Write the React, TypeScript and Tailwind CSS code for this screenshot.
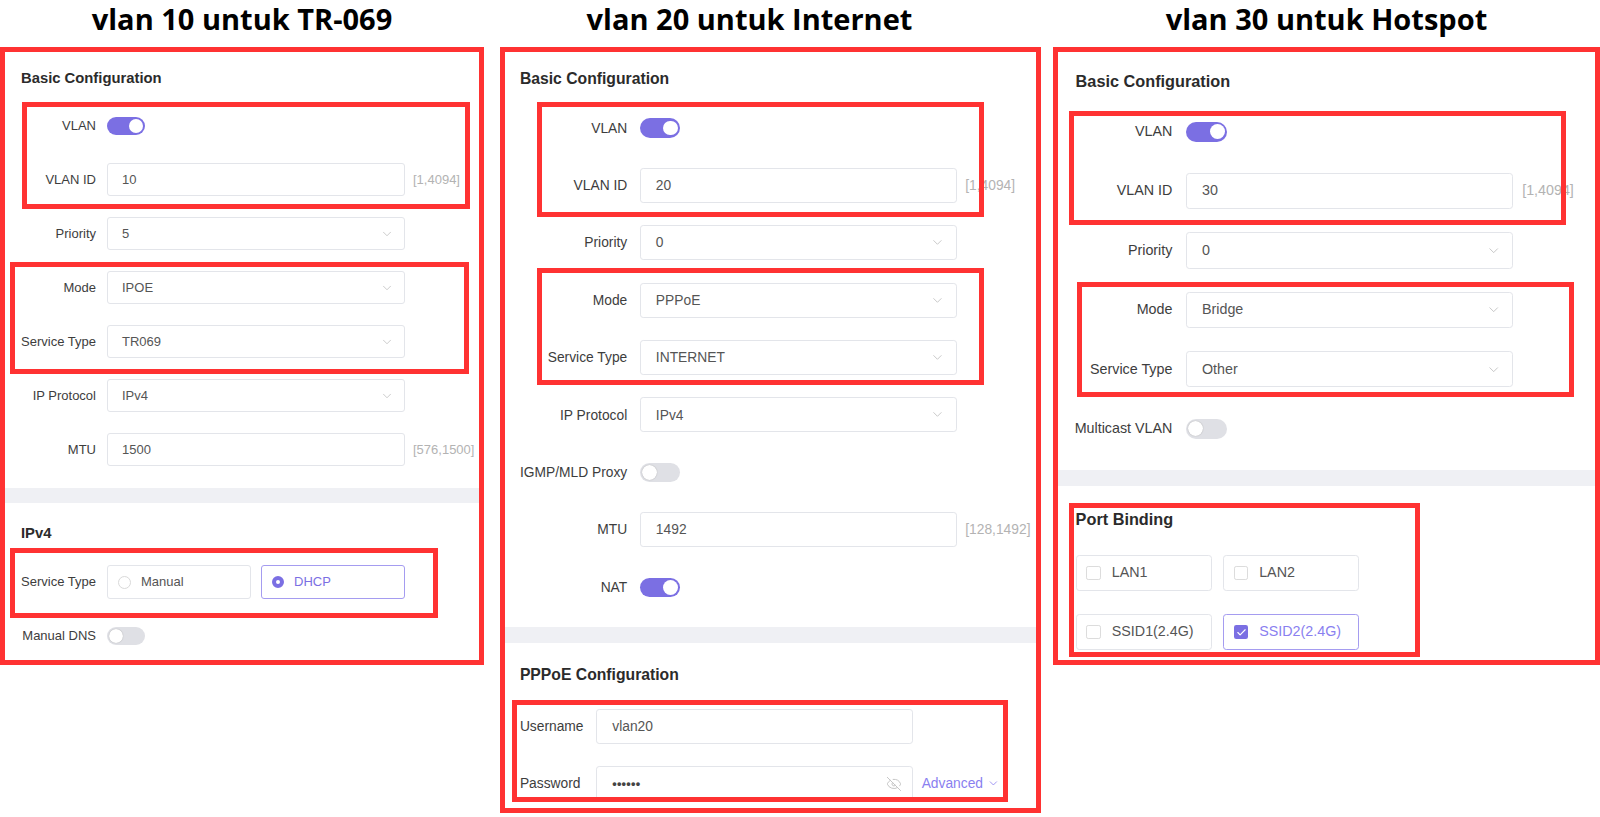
import type { ReactNode } from 'react';
import { Check, ChevronDown, EyeOff } from 'lucide-react';

// shared look of the router form controls
const box =
  'flex h-[33px] w-[298px] shrink-0 items-center rounded-[3px] border border-[#e3e5ea] bg-white pl-[14px] text-[13px] text-[#555]';

function Row({ label, w, children }: { label: string; w: string; children?: ReactNode }) {
  return (
    <div className="flex h-[33px] items-center">
      <div className={`flex shrink-0 justify-end whitespace-nowrap text-[13px] text-[#3d3d3d] ${w}`}>{label}</div>
      {children}
    </div>
  );
}

function TextBox({ value, hint }: { value: string; hint?: string }) {
  return (
    <>
      <div className={box}>{value}</div>
      {hint && <span className="ml-2 whitespace-nowrap text-[13px] text-[#b3b3b3]">{hint}</span>}
    </>
  );
}

function Select({ value }: { value: string }) {
  return (
    <div className={`${box} justify-between pr-[10px]`}>
      <span>{value}</span>
      <ChevronDown size={14} strokeWidth={1.25} className="text-[#b9b9b9]" />
    </div>
  );
}

function Toggle({ on }: { on: boolean }) {
  return on ? (
    <div className="flex h-[18px] w-[38px] items-center justify-end rounded-full bg-[#7b6fe3] px-[2px]">
      <div className="h-[14px] w-[14px] rounded-full bg-white" />
    </div>
  ) : (
    <div className="flex h-[18px] w-[38px] items-center rounded-full bg-[#dfe0e5] px-[2px]">
      <div className="h-[14px] w-[14px] rounded-full bg-white shadow-[0_0_1px_rgba(0,0,0,0.35)]" />
    </div>
  );
}

function Heading({ children }: { children: ReactNode }) {
  return <h3 className="h-[20px] text-[14.8px] font-bold leading-[20px] text-[#2b2b2b]">{children}</h3>;
}

function Band() {
  return <div className="h-[15px] bg-[#eff0f4]" />;
}

function Radio({ label, checked }: { label: string; checked?: boolean }) {
  return (
    <div
      className={`flex h-[34px] w-[144px] items-center rounded-[3px] border pl-[10px] text-[13px] ${
        checked ? 'border-[#a59cf0] text-[#7b6fe3]' : 'border-[#e3e5ea] text-[#555]'
      }`}
    >
      {checked ? (
        <span className="h-[12px] w-[12px] rounded-full border-[4px] border-[#7b6fe3] bg-white" />
      ) : (
        <span className="h-[13px] w-[13px] rounded-full border border-[#d9d9d9] bg-white" />
      )}
      <span className="ml-[10px]">{label}</span>
    </div>
  );
}

function Port({ label, checked }: { label: string; checked?: boolean }) {
  return (
    <div
      className={`flex h-[33px] w-[124px] items-center rounded-[3px] border pl-[9px] text-[13px] ${
        checked ? 'border-[#a59cf0] text-[#8a7ff0]' : 'border-[#e3e5ea] text-[#555]'
      }`}
    >
      {checked ? (
        <span className="flex h-[13px] w-[13px] items-center justify-center rounded-[2px] bg-[#7b6fe3]">
          <Check size={10} strokeWidth={2.5} className="text-white" />
        </span>
      ) : (
        <span className="h-[13px] w-[13px] rounded-[2px] border border-[#dcdcdc] bg-white" />
      )}
      <span className="ml-[10px]">{label}</span>
    </div>
  );
}

function Panel({ size, marks, children }: { size: string; marks: string[]; children: ReactNode }) {
  return (
    <div className={`relative shrink-0 overflow-hidden border-[5px] border-[#ff3232] bg-white ${size}`}>
      {children}
      {marks.map((m) => (
        <div key={m} className={`pointer-events-none absolute border-[5px] border-[#ff3232] ${m}`} />
      ))}
    </div>
  );
}

function Column({ title, titleClass, children }: { title: string; titleClass?: string; children: ReactNode }) {
  return (
    <div className="flex shrink-0 flex-col">
      <div
        className={`h-[47px] whitespace-nowrap pt-[4px] text-center font-['Open_Sans',sans-serif] text-[29px] font-bold leading-[29px] text-black ${titleClass ?? ''}`}
      >
        {title}
      </div>
      {children}
    </div>
  );
}

function Tr069() {
  const w = 'w-[75px] mr-[11px]';
  return (
    <Panel
      size="h-[618px] w-[484px]"
      marks={[
        'left-[17px] top-[50px] h-[107px] w-[448px]',
        'left-[5px] top-[210px] h-[112px] w-[459px]',
        'left-[5px] top-[496px] h-[70px] w-[428px]',
      ]}
    >
      <div className="flex flex-col pb-[22px] pl-[16px] pt-[16px]">
        <Heading>Basic Configuration</Heading>
        <div className="mt-[21px] flex flex-col gap-[21px]">
          <Row label="VLAN" w={w}><Toggle on /></Row>
          <Row label="VLAN ID" w={w}><TextBox value="10" hint="[1,4094]" /></Row>
          <Row label="Priority" w={w}><Select value="5" /></Row>
          <Row label="Mode" w={w}><Select value="IPOE" /></Row>
          <Row label="Service Type" w={w}><Select value="TR069" /></Row>
          <Row label="IP Protocol" w={w}><Select value="IPv4" /></Row>
          <Row label="MTU" w={w}><TextBox value="1500" hint="[576,1500]" /></Row>
        </div>
      </div>
      <Band />
      <div className="flex flex-col pl-[16px] pt-[20px]">
        <Heading>IPv4</Heading>
        <div className="mt-[22px] flex h-[34px] items-center">
          <div className={`flex shrink-0 justify-end whitespace-nowrap text-[13px] text-[#3d3d3d] ${w}`}>Service Type</div>
          <div className="flex gap-[10px]">
            <Radio label="Manual" />
            <Radio label="DHCP" checked />
          </div>
        </div>
        <div className="mt-[20px]">
          <Row label="Manual DNS" w={w}><Toggle on={false} /></Row>
        </div>
      </div>
    </Panel>
  );
}

function Internet() {
  const w = 'w-[101px] mr-[12px]';
  const side = 'w-[60px] mr-[12px] whitespace-nowrap text-[13px] text-[#3d3d3d]';
  return (
    <Panel
      size="h-[766px] w-[541px]"
      marks={[
        'left-[32px] top-[50px] h-[115px] w-[447px]',
        'left-[32px] top-[216px] h-[117px] w-[447px]',
        'left-[7px] top-[648px] h-[102px] w-[496px]',
      ]}
    >
      <div className="[zoom:1.063]">
        <div className="flex flex-col pb-[21px] pl-[14px] pt-[15px]">
          <Heading>Basic Configuration</Heading>
          <div className="mt-[20px] flex flex-col gap-[21px]">
            <Row label="VLAN" w={w}><Toggle on /></Row>
            <Row label="VLAN ID" w={w}><TextBox value="20" hint="[1,4094]" /></Row>
            <Row label="Priority" w={w}><Select value="0" /></Row>
            <Row label="Mode" w={w}><Select value="PPPoE" /></Row>
            <Row label="Service Type" w={w}><Select value="INTERNET" /></Row>
            <Row label="IP Protocol" w={w}><Select value="IPv4" /></Row>
            <Row label="IGMP/MLD Proxy" w={w}><Toggle on={false} /></Row>
            <Row label="MTU" w={w}><TextBox value="1492" hint="[128,1492]" /></Row>
            <Row label="NAT" w={w}><Toggle on /></Row>
          </div>
        </div>
        <Band />
        <div className="flex flex-col pl-[14px] pt-[20px]">
          <Heading>PPPoE Configuration</Heading>
          <div className="mt-[22px] flex flex-col gap-[21px]">
            <div className="flex h-[33px] items-center">
              <span className={side}>Username</span>
              <div className={box}>vlan20</div>
            </div>
            <div className="flex h-[33px] items-center">
              <span className={side}>Password</span>
              <div className={`${box} justify-between pr-[10px]`}>
                <span className="text-[12px] font-bold tracking-[0.2px] text-[#444]">••••••</span>
                <EyeOff size={15} strokeWidth={1.5} className="text-[#c6c6c6]" />
              </div>
              <span className="ml-2 flex items-center gap-[4px] whitespace-nowrap text-[13px] text-[#8a7ff0]">
                Advanced
                <ChevronDown size={12} strokeWidth={1.5} />
              </span>
            </div>
          </div>
        </div>
      </div>
    </Panel>
  );
}

function Hotspot() {
  const w = 'w-[88px] mr-[12px]';
  return (
    <Panel
      size="h-[618px] w-[547px]"
      marks={[
        'left-[11px] top-[59px] h-[114px] w-[497px]',
        'left-[19px] top-[230px] h-[115px] w-[497px]',
        'left-[11px] top-[451px] h-[154px] w-[351px]',
      ]}
    >
      <div className="[zoom:1.1]">
        <div className="flex flex-col pb-[21px] pl-[16px] pt-[16px]">
          <Heading>Basic Configuration</Heading>
          <div className="mt-[20px] flex flex-col gap-[21px]">
            <Row label="VLAN" w={w}><Toggle on /></Row>
            <Row label="VLAN ID" w={w}><TextBox value="30" hint="[1,4094]" /></Row>
            <Row label="Priority" w={w}><Select value="0" /></Row>
            <Row label="Mode" w={w}><Select value="Bridge" /></Row>
            <Row label="Service Type" w={w}><Select value="Other" /></Row>
            <Row label="Multicast VLAN" w={w}><Toggle on={false} /></Row>
          </div>
        </div>
        <Band />
        <div className="flex flex-col pl-[16px] pt-[20px]">
          <Heading>Port Binding</Heading>
          <div className="mt-[22px] grid w-[258px] grid-cols-2 gap-x-[10px] gap-y-[21px]">
            <Port label="LAN1" />
            <Port label="LAN2" />
            <Port label="SSID1(2.4G)" />
            <Port label="SSID2(2.4G)" checked />
          </div>
        </div>
      </div>
    </Panel>
  );
}

export default function App() {
  return (
    <div className="flex h-[817px] w-[1600px] items-start overflow-hidden bg-white font-['Liberation_Sans',Arial,sans-serif]">
      <Column title="vlan 10 untuk TR-069">
        <Tr069 />
      </Column>
      <div className="ml-[16px]">
        <Column title="vlan 20 untuk Internet" titleClass="pr-[42px]">
          <Internet />
        </Column>
      </div>
      <div className="ml-[12px]">
        <Column title="vlan 30 untuk Hotspot">
          <Hotspot />
        </Column>
      </div>
    </div>
  );
}
